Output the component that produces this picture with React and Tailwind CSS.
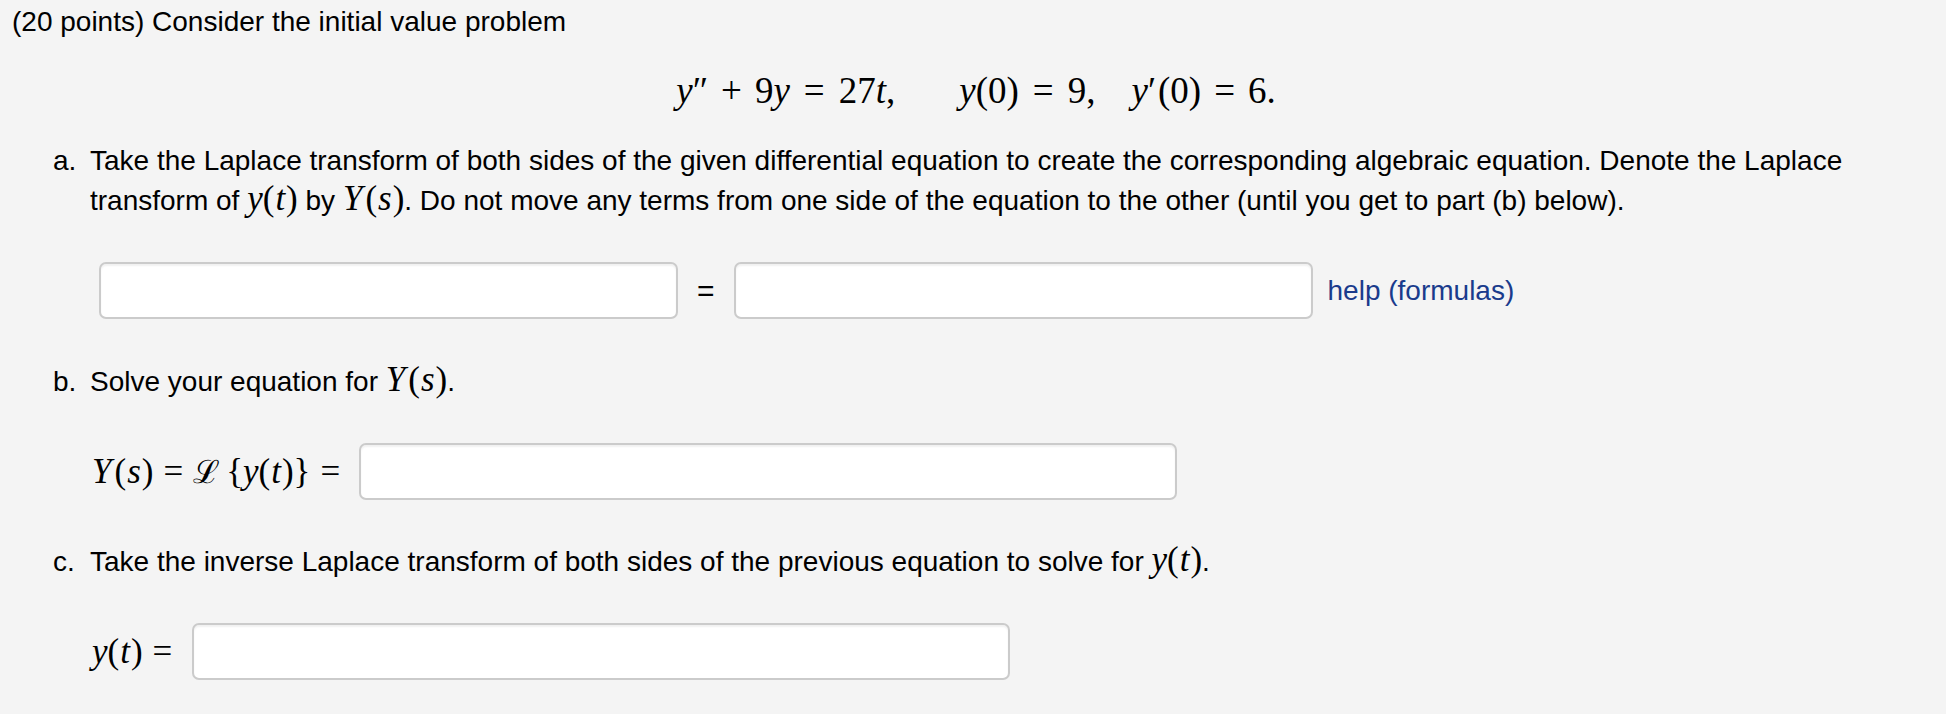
import React from "react";

const I = ({ children, className = "" }) => <span className={`italic ${className}`}>{children}</span>;

const Input = ({ w }) => (
  <div
    className={`${w} h-[57px] shrink-0 rounded-[7px] border-2 border-[#cbcbcb] bg-white shadow-[inset_0_2px_2px_rgba(0,0,0,0.06)]`}
  />
);

const M = ({ children, className = "" }) => (
  <span className={`font-['Liberation_Serif',serif] text-[35px] leading-none ${className}`}>{children}</span>
);

const Ys = () => (
  <>
    <I>Y</I>
    <span className="ml-[3px]">(</span>
    <I className="px-[1px]">s</I>)
  </>
);

const Yt = () => (
  <>
    <I>y</I>(<I className="px-[1px]">t</I>)
  </>
);

export default function App() {
  return (
    <div className="min-h-screen w-full bg-[#f4f4f4] text-black font-['Liberation_Sans',Arial,sans-serif] text-[28px] leading-[40px]">
      <div className="pl-[12px] pt-[2px]">
        <div>(20 points) Consider the initial value problem</div>

        <div className="mt-[25px] text-center leading-[48px] font-['Liberation_Serif',serif] text-[37px] pr-[6px] whitespace-nowrap">
          <I>y</I>
          <span>″</span>
          <span className="mx-[13px]">+</span>9<I>y</I>
          <span className="mx-[14px]">=</span>27<I>t</I>,
          <span className="inline-block w-[64px]" />
          <I>y</I>(0)
          <span className="mx-[14px]">=</span>9,
          <span className="inline-block w-[36px]" />
          <I>y</I>′<span className="ml-[2px]">(0)</span>
          <span className="mx-[13px]">=</span>6.
        </div>

        <div className="mt-[26px] flex pl-[41px]">
          <div className="w-[37px] shrink-0">a.</div>
          <div className="pr-[60px]">
            Take the Laplace transform of both sides of the given differential equation to create the corresponding algebraic equation. Denote the Laplace transform of{" "}
            <M>
              <Yt />
            </M>{" "}
            by{" "}
            <M>
              <Ys />
            </M>
            . Do not move any terms from one side of the equation to the other (until you get to part (b) below).
          </div>
        </div>

        <div className="mt-[41px] flex items-center pl-[87px]">
          <Input w="w-[579px]" />
          <span className="mx-[19px] text-[30px]">=</span>
          <Input w="w-[579px]" />
          <a className="ml-[15px] text-[#1a3b8c]">help (formulas)</a>
        </div>

        <div className="mt-[43px] flex pl-[41px]">
          <div className="w-[37px] shrink-0">b.</div>
          <div>
            Solve your equation for{" "}
            <M>
              <Ys />
            </M>
            .
          </div>
        </div>

        <div className="mt-[41px] flex items-center pl-[80px]">
          <M className="whitespace-nowrap">
            <Ys />
            <span className="mx-[10px]">=</span>
            <span className="font-['DejaVu_Serif',serif] text-[32px]">ℒ</span>
            <span className="ml-[6px]">{"{"}</span>
            <Yt />
            <span>{"}"}</span>
            <span className="ml-[10px]">=</span>
          </M>
          <div className="ml-[19px]">
            <Input w="w-[818px]" />
          </div>
        </div>

        <div className="mt-[42px] flex pl-[41px]">
          <div className="w-[37px] shrink-0">c.</div>
          <div>
            Take the inverse Laplace transform of both sides of the previous equation to solve for{" "}
            <M>
              <Yt />
            </M>
            .
          </div>
        </div>

        <div className="mt-[41px] flex items-center pl-[80px]">
          <M className="whitespace-nowrap">
            <Yt />
            <span className="ml-[10px]">=</span>
          </M>
          <div className="ml-[20px]">
            <Input w="w-[818px]" />
          </div>
        </div>
      </div>
    </div>
  );
}
